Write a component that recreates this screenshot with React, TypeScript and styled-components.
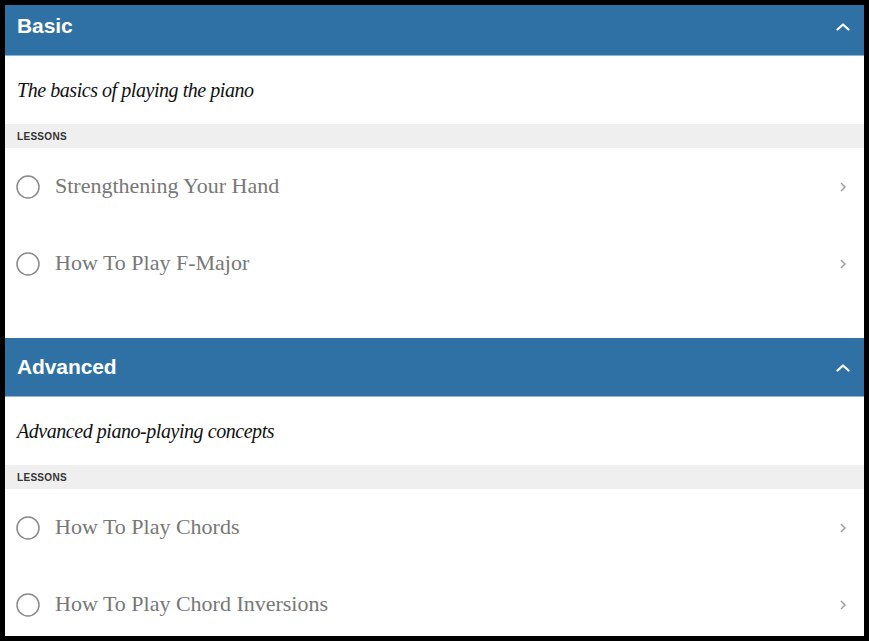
import React, { useLayoutEffect, useRef } from "react";
import styled, { createGlobalStyle } from "styled-components";

const Global = createGlobalStyle`
  html, body { margin: 0; padding: 0; background: #000; }
  body { padding: 5px; box-sizing: border-box; height: 641px; overflow: hidden; }
  * { box-sizing: border-box; }
`;

const Frame = styled.div`
  width: 859px;
  height: 631px;
  overflow: hidden;
  background: #fff;
`;

const Section = styled.section`
  display: flex;
  flex-direction: column;
  padding-bottom: 36px;
`;

const Header = styled.div`
  height: 59px;
  background: #2f71a5;
  border-bottom: 1px solid #8db4d2;
  display: flex;
  align-items: center;
  justify-content: space-between;
  padding: 0 14px 0 12px;
`;

const Title = styled.h2`
  margin: 0;
  font-family: "Liberation Sans", Arial, sans-serif;
  font-weight: 700;
  font-size: 21px;
  color: #fff;
  letter-spacing: -0.1px;
`;

const Description = styled.div`
  height: 68px;
  display: flex;
  align-items: center;
  padding-left: 12px;
  font-family: "Liberation Serif", "Times New Roman", serif;
  font-style: italic;
  font-size: 20px;
  color: #111;
  letter-spacing: -0.45px;
`;

const LessonsBar = styled.div`
  height: 24px;
  background: #efefef;
  display: flex;
  align-items: center;
  padding-left: 12px;
  font-family: "Liberation Sans", Arial, sans-serif;
  font-weight: 700;
  font-size: 10px;
  letter-spacing: 0.3px;
  color: #333;
`;

const Row = styled.div`
  height: 77px;
  display: flex;
  align-items: center;
  padding: 0 17px 0 11px;
  gap: 15px;
`;

const Label = styled.span`
  flex: 1;
  font-family: "Liberation Serif", "Times New Roman", serif;
  font-size: 22px;
  color: #777;
  margin-top: -2px;
`;

const Circle = () => (
  <svg width="24" height="24" viewBox="0 0 24 24">
    <circle cx="12" cy="12" r="11" fill="none" stroke="#8a8a8a" strokeWidth="1.5" />
  </svg>
);

const ChevronRight = () => (
  <svg width="8" height="12" viewBox="0 0 8 12">
    <path d="M2 2 L6 6 L2 10" fill="none" stroke="#999" strokeWidth="1.4" />
  </svg>
);

const ChevronUp = () => (
  <svg width="14" height="9" viewBox="0 0 14 9">
    <path d="M1.5 7.5 L7 2.5 L12.5 7.5" fill="none" stroke="#fff" strokeWidth="2.2" strokeLinecap="round" strokeLinejoin="round" />
  </svg>
);

const sections = [
  {
    title: "Basic",
    description: "The basics of playing the piano",
    lessons: ["Strengthening Your Hand", "How To Play F-Major"],
  },
  {
    title: "Advanced",
    description: "Advanced piano-playing concepts",
    lessons: ["How To Play Chords", "How To Play Chord Inversions"],
  },
];

export default function App() {
  const ref = useRef<HTMLDivElement>(null);
  useLayoutEffect(() => {
    if (ref.current) ref.current.scrollTop = 8;
  }, []);
  return (
    <>
      <Global />
      <Frame ref={ref}>
        {sections.map((s) => (
          <Section key={s.title}>
            <Header>
              <Title>{s.title}</Title>
              <ChevronUp />
            </Header>
            <Description>{s.description}</Description>
            <LessonsBar>LESSONS</LessonsBar>
            {s.lessons.map((l) => (
              <Row key={l}>
                <Circle />
                <Label>{l}</Label>
                <ChevronRight />
              </Row>
            ))}
          </Section>
        ))}
      </Frame>
    </>
  );
}
